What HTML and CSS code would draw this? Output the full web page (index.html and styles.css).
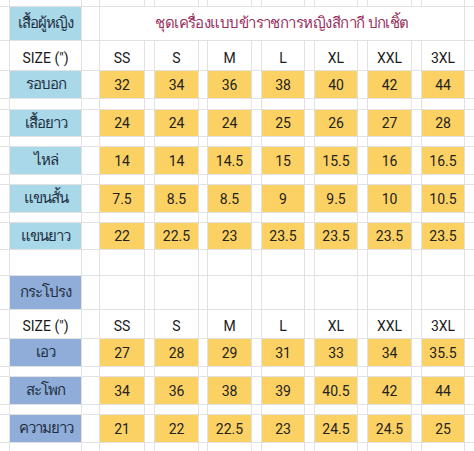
FILE: index.html
```html
<!DOCTYPE html>
<html lang="th">
<head>
<meta charset="utf-8">
<title>ชุดเครื่องแบบข้าราชการหญิงสีกากี ปกเชิ้ต</title>
<link rel="stylesheet" href="styles.css">
</head>
<body>
<div class="sheet">
<span></span><span></span><span></span><span></span><span></span><span></span><span></span><span></span><span></span><span></span><span></span><span></span><span></span><span></span><span></span><span></span><span></span>

<span></span><div class="lab top">เสื้อผู้หญิง</div><span></span><div class="title">ชุดเครื่องแบบข้าราชการหญิงสีกากี ปกเชิ้ต</div><span></span>

<span></span><div class="hd">SIZE (")</div><span></span><div class="hd">SS</div><span></span><div class="hd">S</div><span></span><div class="hd">M</div><span></span><div class="hd">L</div><span></span><div class="hd">XL</div><span></span><div class="hd">XXL</div><span></span><div class="hd">3XL</div><span></span>

<span></span><div class="lab top">รอบอก</div><span></span><div class="v">32</div><span></span><div class="v">34</div><span></span><div class="v">36</div><span></span><div class="v">38</div><span></span><div class="v">40</div><span></span><div class="v">42</div><span></span><div class="v">44</div><span></span>

<span></span><span></span><span></span><span></span><span></span><span></span><span></span><span></span><span></span><span></span><span></span><span></span><span></span><span></span><span></span><span></span><span></span>

<span></span><div class="lab top">เสื้อยาว</div><span></span><div class="v">24</div><span></span><div class="v">24</div><span></span><div class="v">24</div><span></span><div class="v">25</div><span></span><div class="v">26</div><span></span><div class="v">27</div><span></span><div class="v">28</div><span></span>

<span></span><span></span><span></span><span></span><span></span><span></span><span></span><span></span><span></span><span></span><span></span><span></span><span></span><span></span><span></span><span></span><span></span>

<span></span><div class="lab top">ไหล่</div><span></span><div class="v">14</div><span></span><div class="v">14</div><span></span><div class="v">14.5</div><span></span><div class="v">15</div><span></span><div class="v">15.5</div><span></span><div class="v">16</div><span></span><div class="v">16.5</div><span></span>

<span></span><span></span><span></span><span></span><span></span><span></span><span></span><span></span><span></span><span></span><span></span><span></span><span></span><span></span><span></span><span></span><span></span>

<span></span><div class="lab top">แขนสั้น</div><span></span><div class="v">7.5</div><span></span><div class="v">8.5</div><span></span><div class="v">8.5</div><span></span><div class="v">9</div><span></span><div class="v">9.5</div><span></span><div class="v">10</div><span></span><div class="v">10.5</div><span></span>

<span></span><span></span><span></span><span></span><span></span><span></span><span></span><span></span><span></span><span></span><span></span><span></span><span></span><span></span><span></span><span></span><span></span>

<span></span><div class="lab top">แขนยาว</div><span></span><div class="v">22</div><span></span><div class="v">22.5</div><span></span><div class="v">23</div><span></span><div class="v">23.5</div><span></span><div class="v">23.5</div><span></span><div class="v">23.5</div><span></span><div class="v">23.5</div><span></span>

<span></span><span></span><span></span><span></span><span></span><span></span><span></span><span></span><span></span><span></span><span></span><span></span><span></span><span></span><span></span><span></span><span></span>

<span></span><div class="lab skirt">กระโปรง</div><span></span><span></span><span></span><span></span><span></span><span></span><span></span><span></span><span></span><span></span><span></span><span></span><span></span><span></span><span></span>

<span></span><div class="hd">SIZE (")</div><span></span><div class="hd">SS</div><span></span><div class="hd">S</div><span></span><div class="hd">M</div><span></span><div class="hd">L</div><span></span><div class="hd">XL</div><span></span><div class="hd">XXL</div><span></span><div class="hd">3XL</div><span></span>

<span></span><div class="lab skirt">เอว</div><span></span><div class="v">27</div><span></span><div class="v">28</div><span></span><div class="v">29</div><span></span><div class="v">31</div><span></span><div class="v">33</div><span></span><div class="v">34</div><span></span><div class="v">35.5</div><span></span>

<span></span><span></span><span></span><span></span><span></span><span></span><span></span><span></span><span></span><span></span><span></span><span></span><span></span><span></span><span></span><span></span><span></span>

<span></span><div class="lab skirt">สะโพก</div><span></span><div class="v">34</div><span></span><div class="v">36</div><span></span><div class="v">38</div><span></span><div class="v">39</div><span></span><div class="v">40.5</div><span></span><div class="v">42</div><span></span><div class="v">44</div><span></span>

<span></span><span></span><span></span><span></span><span></span><span></span><span></span><span></span><span></span><span></span><span></span><span></span><span></span><span></span><span></span><span></span><span></span>

<span></span><div class="lab skirt">ความยาว</div><span></span><div class="v">21</div><span></span><div class="v">22</div><span></span><div class="v">22.5</div><span></span><div class="v">23</div><span></span><div class="v">24.5</div><span></span><div class="v">24.5</div><span></span><div class="v">25</div><span></span>

<span></span><span></span><span></span><span></span><span></span><span></span><span></span><span></span><span></span><span></span><span></span><span></span><span></span><span></span><span></span><span></span><span></span>
</div>
</body>
</html>
```

FILE: styles.css
```css
html, body {
  margin: 0;
  padding: 0;
  background: #ffffff;
  overflow: hidden;
}

.sheet {
  width: 474px;
  height: 451px;
  overflow: hidden;
  display: grid;
  grid-template-columns: 9px 71px 17px 44px 9px 43px 8px 43px 9px 42px 9px 42px 9px 43px 9px 42px 1fr;
  grid-template-rows: 6px 33px 29px 27px 10px 26px 9px 27px 9px 27px 9px 26px 25px 33px 28px 27px 9px 27px 9px 27px 10px;
  gap: 1px;
  background: #e2e2e2;
  font-family: Roboto, "Noto Sans", "DejaVu Sans", sans-serif;
  font-size: 14px;
  color: #222222;
}

.sheet > span,
.sheet > div {
  background: #ffffff;
  display: flex;
  align-items: center;
  justify-content: center;
  white-space: nowrap;
  line-height: 1;
}

.sheet > .lab {
  font-size: 15px;
  color: #1f2f3f;
  letter-spacing: -1px;
}

.sheet > .top {
  background: #a9d8e9;
}

.sheet > .skirt {
  background: #8fadd8;
}

.sheet > .title {
  grid-column: span 13;
  color: #9a2f5e;
  font-size: 15px;
  letter-spacing: -0.55px;
}

.sheet > .hd {
  padding-top: 4px;
  color: #1a1a1a;
}

.sheet > .v {
  background: #fcd163;
  color: #222222;
}
```
